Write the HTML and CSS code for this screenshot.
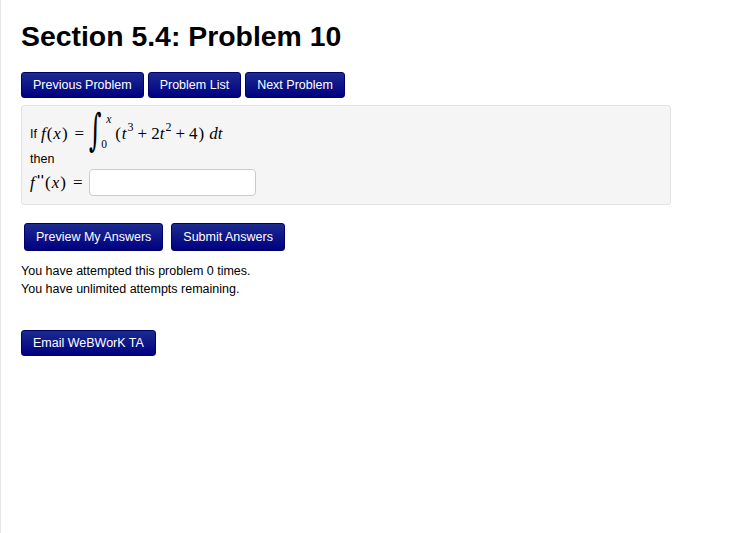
FILE: index.html
```html
<!DOCTYPE html>
<html lang="en">
<head>
<meta charset="utf-8">
<title>Section 5.4: Problem 10</title>
<link rel="stylesheet" href="styles.css">
</head>
<body>
<div class="page">
  <h1 class="title">Section 5.4: Problem 10</h1>
  <div class="nav">
    <a class="btn" href="#">Previous Problem</a>
    <a class="btn" href="#">Problem List</a>
    <a class="btn" href="#">Next Problem</a>
  </div>
  <div class="problem">
    <div class="line line-first">
      <span class="txt">If</span>
      <span class="math">
        <i>f</i><span class="up">(</span><i>x</i><span class="up">)</span><span class="rel">=</span><span class="integral"><span class="int">∫</span><span class="lim lim-up"><i>x</i></span><span class="lim lim-lo">0</span></span><span class="up">(</span><i>t</i><sup>3</sup><span class="op">+</span>2<i>t</i><sup>2</sup><span class="op">+</span>4<span class="up">)</span><span class="thin"></span><i>d</i><i>t</i>
      </span>
    </div>
    <div class="line line-then"><span class="txt">then</span></div>
    <div class="line line-answer">
      <span class="math"><i>f</i><span class="prime">''</span><span class="up">(</span><i>x</i><span class="up">)</span><span class="rel rel-answer">=</span></span>
      <input class="answer" type="text" aria-label="answer">
    </div>
  </div>
  <div class="actions">
    <button class="btn btn-big" type="button">Preview My Answers</button>
    <button class="btn btn-big" type="button">Submit Answers</button>
  </div>
  <div class="attempts">
    <div>You have attempted this problem 0 times.</div>
    <div>You have unlimited attempts remaining.</div>
  </div>
  <div class="email">
    <a class="btn" href="#">Email WeBWorK TA</a>
  </div>
</div>
</body>
</html>
```

FILE: styles.css
```css
html, body {
  margin: 0;
  padding: 0;
  background: #ffffff;
}
body {
  font-family: "Liberation Sans", Arial, sans-serif;
  font-size: 12.5px;
  color: #000000;
}
.page {
  min-height: 533px;
  box-sizing: border-box;
  border-left: 1px solid #e6e6e6;
  padding: 19px 0 0 20px;
}
.title {
  margin: 0;
  font-size: 28.4px;
  line-height: 34px;
  font-weight: bold;
}
.nav {
  display: flex;
  gap: 4px;
  margin-top: 19px;
}
.btn {
  display: inline-flex;
  align-items: center;
  justify-content: center;
  box-sizing: border-box;
  height: 26px;
  padding: 0 11px;
  border: 1px solid #00006a;
  border-radius: 3px;
  background: linear-gradient(#1c2b90, #000080);
  color: #ffffff;
  font-family: "Liberation Sans", Arial, sans-serif;
  font-size: 12.5px;
  text-decoration: none;
  line-height: 1;
}
.problem {
  width: 650px;
  height: 100px;
  box-sizing: border-box;
  margin-top: 7px;
  padding: 7px 8px 0;
  background: #f5f5f5;
  border: 1px solid #e3e3e3;
  border-radius: 3px;
}
.line {
  display: flex;
  align-items: center;
}
.line-first {
  height: 37px;
}
.line-first .txt,
.line-first .math {
  position: relative;
  top: 2px;
}
.line-then {
  height: 17px;
}
.line-answer {
  margin-top: 2px;
  height: 27px;
}
.txt {
  margin-right: 4px;
}
.math {
  font-family: "Liberation Serif", "Times New Roman", serif;
  font-size: 17px;
  display: inline-flex;
  align-items: center;
  white-space: nowrap;
}
.math i {
  font-style: italic;
}
.up {
  margin: 0 1px;
}
.math sup {
  font-size: 12px;
  position: relative;
  top: -6px;
  vertical-align: baseline;
  margin-left: 1px;
}
.rel {
  margin: 0 6px;
}
.rel-answer {
  margin-right: 3px;
}
.op {
  margin: 0 4px;
}
.thin {
  display: inline-block;
  width: 4px;
}
.prime {
  font-family: "DejaVu Sans", sans-serif;
  font-size: 12px;
  font-weight: bold;
  position: relative;
  top: -3px;
  margin-left: 2px;
}
.integral {
  position: relative;
  top: -2px;
  display: inline-block;
  width: 24px;
  height: 37px;
}
.int {
  position: absolute;
  left: -1px;
  top: -9px;
  font-size: 44px;
  line-height: 1.2;
  font-style: italic;
  font-family: "DejaVu Serif", serif;
  font-weight: normal;
  transform: scaleX(0.55);
  transform-origin: left center;
}
.lim {
  position: absolute;
  font-size: 11.5px;
  line-height: 1;
}
.lim-up {
  left: 16px;
  top: 1px;
}
.lim-lo {
  left: 11px;
  bottom: 0;
}
.answer {
  width: 167px;
  height: 27px;
  box-sizing: border-box;
  margin-left: 3px;
  border: 1px solid #cccccc;
  border-radius: 4px;
  background: #ffffff;
  padding: 0 6px;
}
.actions {
  display: flex;
  gap: 8px;
  margin-top: 18px;
  margin-left: 3px;
}
.btn-big {
  height: 28px;
  padding: 0 11px;
}
.attempts {
  margin-top: 11px;
  line-height: 18px;
}
.email {
  margin-top: 32px;
}
```
